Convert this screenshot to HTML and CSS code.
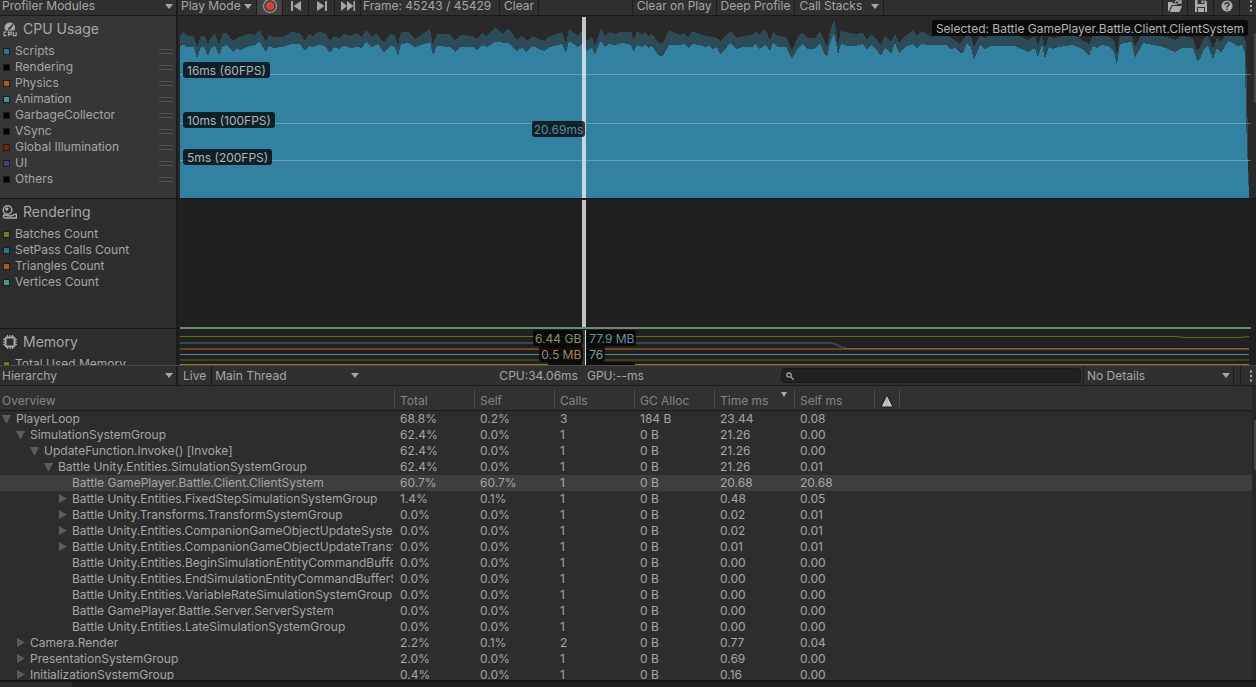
FILE: index.html
```html
<!DOCTYPE html>
<html lang="en">
<head>
<meta charset="utf-8">
<title>Profiler</title>
<link rel="stylesheet" href="styles.css">
</head>
<body>
<header class="toolbar toolbar-top">
  <label class="drop drop-side"><select aria-label="Profiler Modules"><option>Profiler Modules</option></select></label>
  <label class="drop drop-mode"><select aria-label="Target"><option>Play Mode</option></select></label>
  <button class="tool on" aria-label="Record"><svg width="16" height="16" viewBox="0 0 16 16"><circle cx="8" cy="8" r="6.500" fill="none" stroke="#999" stroke-width="1.200"/><circle cx="8" cy="8" r="4.300" fill="#d2423a"/></svg></button>
  <button class="tool" aria-label="Previous frame"><svg width="16" height="16" viewBox="0 0 16 16"><path fill="#a5a5a5" d="M3 3h2v10H3zM13 3v10L5.500 8z"/></svg></button>
  <button class="tool" aria-label="Next frame"><svg width="16" height="16" viewBox="0 0 16 16"><path fill="#a5a5a5" d="M11 3h2v10h-2zM3 3v10l7.500-5z"/></svg></button>
  <button class="tool" aria-label="Current frame"><svg width="16" height="16" viewBox="0 0 16 16"><path fill="#a5a5a5" d="M13.500 3h1.500v10h-1.500zM1 3v10l6-5zM7 3v10l6.500-5z"/></svg></button>
  <span class="frame">Frame: 45243 / 45429</span>
  <button class="tool text">Clear</button>
  <span class="gap"></span>
  <button class="tool text first">Clear on Play</button>
  <button class="tool text">Deep Profile</button>
  <button class="tool text stacks">Call Stacks</button>
  <button class="tool more" aria-label="Call stack options"><i class="arrow"></i></button>
  <span class="gap wide"></span>
  <button class="tool first" aria-label="Load"><svg width="16" height="16" viewBox="0 0 16 16"><path fill="#aaa" d="M1 13V4h4l1.500 1.500H10V7H4.500L2 13z"/><path fill="#aaa" d="M2.800 14L5.300 8H15l-2.500 6z"/><path fill="none" stroke="#aaa" stroke-width="1.400" d="M8 4.500C9 2 12 2 13.500 4.500M14 1.500v3.500h-3.500"/></svg></button>
  <button class="tool" aria-label="Save"><svg width="16" height="16" viewBox="0 0 16 16"><path fill="#aaa" fill-rule="evenodd" d="M2 2h10l2 2v10H2zM4.500 2v4h7V2zM4 9v5h8V9z"/><path fill="#aaa" d="M8.500 2.500h2v2.500h-2zM5 10h6v4H5z"/></svg></button>
  <button class="tool" aria-label="Help"><svg width="16" height="16" viewBox="0 0 16 16"><circle cx="8" cy="8" r="5.500" fill="#aaa"/><path fill="none" stroke="#303030" stroke-width="1.500" d="M6 6.800C6 4 10 4 10 6.500 10 8 8 8 8 9.500M8 10.500V12"/></svg></button>
  <button class="tool dots" aria-label="Menu"><svg width="4" height="16" viewBox="0 0 4 16"><path fill="#aaa" d="M1 2.500h2v2H1zM1 7h2v2H1zM1 11.500h2v2H1z"/></svg></button>
</header>

<main class="modules">
  <section class="module cpu">
    <div class="side">
      <h2><svg width="16" height="16" viewBox="0 0 16 16"><path fill="#a8a8a8" fill-rule="evenodd" d="M3.200 9.500A5.300 5.300 0 1 1 12.400 9.500zM10.800 2.800L7 6.500a1.200 1.200 0 1 0 1.500 1.500l3-4.300z"/><path fill="none" stroke="#a8a8a8" stroke-width="1.200" d="M4.500 11.200H2v3.500h2.500M6.500 15.300v-4.100h2.700v2.200H6.500M11.300 11v3.700h2.800V11"/></svg>CPU Usage</h2>
      <ul>
        <li><i class="box blue"></i>Scripts<b></b></li>
        <li><i class="box black"></i>Rendering<b></b></li>
        <li><i class="box orange"></i>Physics<b></b></li>
        <li><i class="box teal"></i>Animation<b></b></li>
        <li><i class="box black"></i>GarbageCollector<b></b></li>
        <li><i class="box black"></i>VSync<b></b></li>
        <li><i class="box red"></i>Global Illumination<b></b></li>
        <li><i class="box purple"></i>UI<b></b></li>
        <li><i class="box black"></i>Others<b></b></li>
      </ul>
    </div>
    <div class="chart">
      <svg class="plot" viewBox="180 16 1071 182" preserveAspectRatio="none" shape-rendering="crispEdges">
        <path fill="#2d4a57" d="M180 198V35L183 32 189 36 194 36 197 47 201 36 205 36 208 44 211 37 215 34 219 44 223 33 227 33 233 41 239 37 248 34 255 35 259 30 266 41 269 35 273 37 283 37 291 32 300 33 305 41 309 34 313 36 318 32 325 33 330 41 334 36 339 38 344 34 350 36 357 33 362 37 366 30 372 37 376 33 384 43 390 34 395 35 398 45 401 32 408 32 415 39 430 29 433 44 437 34 450 34 455 41 460 35 473 36 477 39 482 33 487 36 495 27 502 34 508 28 517 40 522 36 527 41 532 36 544 41 550 36 562 32 566 43 569 29 578 36 583 29 587 41 592 36 595 46 600 30 602 29 605 36 609 32 615 34 619 32 631 32 634 39 637 31 642 34 645 32 648 36 652 34 659 43 663 43 669 30 680 35 684 33 688 38 692 31 700 34 705 36 713 37 717 38 720 41 725 36 730 31 737 38 742 36 752 35 756 31 759 35 763 30 766 31 770 40 773 32 778 36 786 37 792 50 798 37 802 32 807 38 815 38 820 31 827 47 830 32 834 19 836 30 838 45 841 31 855 34 863 33 867 40 871 34 876 38 881 45 885 36 891 41 895 34 899 42 908 34 913 30 917 36 921 31 932 37 946 34 960 44 967 34 971 36 974 47 980 35 985 38 991 34 1015 34 1028 40 1035 36 1038 46 1042 33 1045 47 1049 36 1053 38 1073 34 1089 44 1093 35 1102 35 1108 36 1114 40 1117 54 1120 34 1130 31 1135 46 1143 32 1163 36 1175 40 1182 36 1193 38 1197 50 1200 47 1204 38 1208 36 1213 48 1217 38 1221 42 1228 31 1237 34 1242 34 1246 42 1247 90 1249 198z"/>
        <path fill="#3381a0" d="M180 198V46L184 45 187 47 194 47 197 59 201 47 204 47 208 56 211 48 215 46 219 55 223 46 227 45 233 52 237 49 241 50 247 47 255 45 259 41 266 52 269 46 273 48 283 47 291 44 300 44 305 51 309 46 313 47 318 45 325 46 330 53 334 47 339 49 344 46 350 48 357 47 362 48 366 42 372 47 378 44 384 53 390 46 395 47 398 56 401 44 408 43 415 47 430 42 433 55 437 46 450 47 455 52 460 47 473 47 477 50 482 45 487 47 495 42 508 43 517 51 522 48 527 52 532 46 544 51 550 47 562 44 566 53 569 41 578 47 583 43 587 51 592 48 595 55 600 42 602 42 605 47 609 44 615 45 623 43 631 45 634 52 637 45 642 47 645 44 648 48 652 46 659 56 663 56 669 45 680 45 684 44 688 48 692 44 700 45 705 47 709 46 713 49 717 47 720 54 725 50 730 43 737 49 742 47 752 47 756 44 759 49 766 45 770 51 773 43 778 47 786 47 792 59 798 48 802 44 807 49 815 49 820 43 824 53 827 57 830 43 834 33 836 43 838 55 841 44 847 46 855 46 863 44 867 50 871 45 876 49 881 56 885 48 891 54 895 43 899 53 907 46 913 44 917 49 921 44 928 45 946 45 950 49 956 48 960 53 963 53 967 43 971 48 974 60 980 45 985 49 991 46 1015 46 1028 52 1035 48 1038 57 1042 44 1045 59 1049 47 1053 49 1058 47 1073 45 1082 49 1089 56 1093 46 1097 48 1102 45 1108 46 1114 52 1117 65 1120 44 1130 42 1132 43 1135 58 1143 43 1153 45 1163 47 1175 52 1182 48 1193 48 1197 61 1200 59 1204 49 1208 46 1213 59 1217 48 1221 53 1228 41 1233 43 1237 46 1242 45 1245 53 1246 120 1249 198z"/>
        <path fill="none" stroke="#b9cdd3" stroke-opacity=".4" d="M180 74.500H1251M180 123.500H1251M180 160.500H1251"/>
      </svg>
      <span class="tag fps16">16ms (60FPS)</span>
      <span class="tag fps10">10ms (100FPS)</span>
      <span class="tag fps5">5ms (200FPS)</span>
      <div class="cursor"><span class="tag value left cpu-value">20.69ms</span></div>
      <span class="tag selected">Selected: Battle GamePlayer.Battle.Client.ClientSystem</span>
      <span class="thumb"></span>
    </div>
  </section>

  <section class="module rendering">
    <div class="side">
      <h2><svg width="16" height="16" viewBox="0 0 16 16"><circle cx="5.600" cy="6" r="4.300" fill="none" stroke="#a8a8a8" stroke-width="1.400"/><circle cx="4.800" cy="5" r="1.700" fill="#a8a8a8"/><path fill="none" stroke="#a8a8a8" stroke-width="1.400" d="M1.700 10.500C.8 14 2 14 4 14h10.300v-3.800C11.500 9.800 11 12 8.500 12 5 12 3 11.500 1.700 10.500"/></svg>Rendering</h2>
      <ul>
        <li><i class="box green"></i>Batches Count</li>
        <li><i class="box blue"></i>SetPass Calls Count</li>
        <li><i class="box orange"></i>Triangles Count</li>
        <li><i class="box teal"></i>Vertices Count</li>
      </ul>
    </div>
    <div class="chart"><div class="cursor"></div></div>
  </section>

  <section class="module memory">
    <div class="side">
      <h2><svg width="16" height="16" viewBox="0 0 16 16"><rect x="3.500" y="3.500" width="9" height="9" rx="1" fill="none" stroke="#a8a8a8" stroke-width="2"/><path stroke="#a8a8a8" stroke-width="1.200" d="M5.500 1v3M8 1v3M10.500 1v3M5.500 12v3M8 12v3M10.500 12v3M1 5.500h3M1 8h3M1 10.500h3M12 5.500h3M12 8h3M12 10.500h3"/></svg>Memory</h2>
      <ul><li><i class="box green"></i>Total Used Memory</li></ul>
    </div>
    <div class="chart">
      <svg class="plot" viewBox="180 329 1071 36" preserveAspectRatio="none">
        <g fill="none">
          <path stroke="#5f7010" d="M180 336.500H1175L1185 337.500H1240L1249 336.500"/>
          <path stroke="#734315" stroke-width="2" d="M180 349H1249"/>
          <path stroke="#294a59" stroke-width="2" d="M180 343H831C838 343 838 348 846 348"/>
          <path stroke="#6f6a58" d="M844 348.500H1249"/>
          <path stroke="#4a8a92" d="M180 354.500H1249"/>
          <path stroke="#463e14" stroke-width="2" d="M180 360H1249"/>
          <path stroke="#94781a" d="M180 364.500H1249"/>
          <path stroke="#0c0c0c" stroke-width="3" d="M548 363.500H635"/>
        </g>
      </svg>
      <div class="cursor thin">
        <span class="tag value left used">6.44 GB</span>
        <span class="tag value right textures">77.9 MB</span>
        <span class="tag value left second gc">0.5 MB</span>
        <span class="tag value right second count">76</span>
      </div>
    </div>
  </section>
</main>

<div class="toolbar toolbar-detail">
  <label class="drop drop-side"><select aria-label="View"><option>Hierarchy</option></select></label>
  <button class="tool text live">Live</button>
  <label class="drop drop-thread"><select aria-label="Thread"><option>Main Thread</option></select></label>
  <span class="gap"></span>
  <span class="times"><span>CPU:34.06ms</span><span>GPU:--ms</span></span>
  <span class="gap"></span>
  <label class="search"><svg width="8" height="8" viewBox="0 0 10 10"><circle cx="3.800" cy="3.800" r="2.700" fill="none" stroke="#aaa" stroke-width="1.500"/><path stroke="#aaa" stroke-width="1.700" d="M5.800 5.800L9.500 9.500"/></svg><input type="text" aria-label="Search"></label>
  <label class="drop drop-details"><select aria-label="Details"><option>No Details</option></select></label>
  <button class="tool dots last" aria-label="Details menu"><svg width="4" height="16" viewBox="0 0 4 16"><path fill="#aaa" d="M1 2.500h2v2H1zM1 7h2v2H1zM1 11.500h2v2H1z"/></svg></button>
</div>

<div class="hierarchy">
  <table>
    <colgroup><col class="c-name"><col class="c"><col class="c"><col class="c"><col class="c"><col class="c"><col class="c"><col class="c-warn"><col></colgroup>
    <thead><tr><th>Overview</th><th>Total</th><th>Self</th><th>Calls</th><th>GC Alloc</th><th class="sorted">Time ms</th><th>Self ms</th><th class="warn"><svg width="14" height="14" viewBox="0 0 14 14"><path fill="#c4c4c4" stroke="#1c1c1c" d="M7 1L13 13H1z"/><path stroke="#a0a0a0" d="M7 5v4M7 10.500V12"/></svg></th><th></th></tr></thead>
    <tbody>
      <tr><td class="d0"><button class="fold open" aria-label="Collapse"></button>PlayerLoop</td><td>68.8%</td><td>0.2%</td><td>3</td><td>184 B</td><td>23.44</td><td>0.08</td><td></td><td></td></tr>
      <tr><td class="d1"><button class="fold open" aria-label="Collapse"></button>SimulationSystemGroup</td><td>62.4%</td><td>0.0%</td><td>1</td><td>0 B</td><td>21.26</td><td>0.00</td><td></td><td></td></tr>
      <tr><td class="d2"><button class="fold open" aria-label="Collapse"></button>UpdateFunction.Invoke() [Invoke]</td><td>62.4%</td><td>0.0%</td><td>1</td><td>0 B</td><td>21.26</td><td>0.00</td><td></td><td></td></tr>
      <tr><td class="d3"><button class="fold open" aria-label="Collapse"></button>Battle Unity.Entities.SimulationSystemGroup</td><td>62.4%</td><td>0.0%</td><td>1</td><td>0 B</td><td>21.26</td><td>0.01</td><td></td><td></td></tr>
      <tr class="current"><td class="d5">Battle GamePlayer.Battle.Client.ClientSystem</td><td>60.7%</td><td>60.7%</td><td>1</td><td>0 B</td><td>20.68</td><td>20.68</td><td></td><td></td></tr>
      <tr><td class="d4"><button class="fold" aria-label="Expand"></button>Battle Unity.Entities.FixedStepSimulationSystemGroup</td><td>1.4%</td><td>0.1%</td><td>1</td><td>0 B</td><td>0.48</td><td>0.05</td><td></td><td></td></tr>
      <tr><td class="d4"><button class="fold" aria-label="Expand"></button>Battle Unity.Transforms.TransformSystemGroup</td><td>0.0%</td><td>0.0%</td><td>1</td><td>0 B</td><td>0.02</td><td>0.01</td><td></td><td></td></tr>
      <tr><td class="d4"><button class="fold" aria-label="Expand"></button>Battle Unity.Entities.CompanionGameObjectUpdateSystem</td><td>0.0%</td><td>0.0%</td><td>1</td><td>0 B</td><td>0.02</td><td>0.01</td><td></td><td></td></tr>
      <tr><td class="d4"><button class="fold" aria-label="Expand"></button>Battle Unity.Entities.CompanionGameObjectUpdateTransformSystem</td><td>0.0%</td><td>0.0%</td><td>1</td><td>0 B</td><td>0.01</td><td>0.01</td><td></td><td></td></tr>
      <tr><td class="d5">Battle Unity.Entities.BeginSimulationEntityCommandBufferSystem</td><td>0.0%</td><td>0.0%</td><td>1</td><td>0 B</td><td>0.00</td><td>0.00</td><td></td><td></td></tr>
      <tr><td class="d5">Battle Unity.Entities.EndSimulationEntityCommandBufferSystem</td><td>0.0%</td><td>0.0%</td><td>1</td><td>0 B</td><td>0.00</td><td>0.00</td><td></td><td></td></tr>
      <tr><td class="d5">Battle Unity.Entities.VariableRateSimulationSystemGroup</td><td>0.0%</td><td>0.0%</td><td>1</td><td>0 B</td><td>0.00</td><td>0.00</td><td></td><td></td></tr>
      <tr><td class="d5">Battle GamePlayer.Battle.Server.ServerSystem</td><td>0.0%</td><td>0.0%</td><td>1</td><td>0 B</td><td>0.00</td><td>0.00</td><td></td><td></td></tr>
      <tr><td class="d5">Battle Unity.Entities.LateSimulationSystemGroup</td><td>0.0%</td><td>0.0%</td><td>1</td><td>0 B</td><td>0.00</td><td>0.00</td><td></td><td></td></tr>
      <tr><td class="d1"><button class="fold" aria-label="Expand"></button>Camera.Render</td><td>2.2%</td><td>0.1%</td><td>2</td><td>0 B</td><td>0.77</td><td>0.04</td><td></td><td></td></tr>
      <tr><td class="d1"><button class="fold" aria-label="Expand"></button>PresentationSystemGroup</td><td>2.0%</td><td>0.0%</td><td>1</td><td>0 B</td><td>0.69</td><td>0.00</td><td></td><td></td></tr>
      <tr><td class="d1"><button class="fold" aria-label="Expand"></button>InitializationSystemGroup</td><td>0.4%</td><td>0.0%</td><td>1</td><td>0 B</td><td>0.16</td><td>0.00</td><td></td><td></td></tr>
    </tbody>
  </table>
  <span class="thumb"></span>
</div>
<footer class="hscroll"><span></span></footer>
</body>
</html>
```

FILE: styles.css
```css
* { box-sizing: border-box; }
body {
  margin: 0;
  height: 100vh;
  display: flex;
  flex-direction: column;
  overflow: hidden;
  background: #2d2d2d;
  color: #a6a6a6;
  font: 12px/16px Inter, sans-serif;
}
button, select, input { font: inherit; color: inherit; margin: 0; padding: 0; border: 0; background: none; border-radius: 0; outline: 0; }
svg { display: block; flex: none; }

.toolbar { display: flex; flex: none; background: #303030; white-space: nowrap; }
.toolbar-top { height: 16px; align-items: flex-end; overflow: hidden; border-bottom: 1px solid #1a1a1a; }
.toolbar-top > * { height: 18px; }
.toolbar-detail { height: 21px; align-items: stretch; border-top: 1px solid #484848; border-bottom: 1px solid #1a1a1a; }

.drop { position: relative; flex: none; border-right: 1px solid #1c1c1c; }
.drop select { appearance: none; display: block; width: 100%; height: 100%; padding-left: 2px; }
.drop::after, .arrow { content: ""; border: 4px solid transparent; border-top: 5px solid #a6a6a6; border-bottom: 0; }
.drop::after { position: absolute; right: 3px; top: 7px; }
.drop-side { width: 178px; border-right: 2px solid #1c1c1c; }
.drop-mode { width: 79px; }
.drop-mode select { padding-left: 3px; }
.drop-mode::after { right: 4px; }
.drop-thread { width: 150px; border-right: 0; }
.drop-thread select { padding-left: 3px; }
.drop-details { width: 151px; border-left: 1px solid #1c1c1c; margin-left: 2px; }
.drop-details select { padding-left: 3px; }

.tool { flex: none; display: flex; align-items: center; justify-content: center; width: 26px; border-right: 1px solid #1c1c1c; }
.tool.on { background: #424242; }
.tool.text { width: auto; padding: 0 4px; }
.tool.live { padding: 0 5px; }
.tool.first { border-left: 1px solid #1c1c1c; }
.tool.stacks { border-right: 0; }
.tool.more { width: 18px; }
.tool.dots { width: 16px; border-right: 0; justify-content: flex-end; padding-right: 3px; }
.tool.last { border-left: 1px solid #1c1c1c; margin-left: 6px; }
.frame { display: flex; align-items: center; width: 139px; padding-left: 2px; border-right: 1px solid #1c1c1c; }
.gap { flex: 1; }
.gap.wide { flex: 3; }
.times { display: flex; align-items: center; gap: 9px; }
.search { display: flex; align-items: center; flex: 0 0 300px; margin: 2px 0; padding-left: 4px; gap: 4px; background: #212121; border: 1px solid #191919; border-radius: 4px; }
.search input { flex: 1; min-width: 0; }

.modules { flex: none; }
.module { display: flex; border-bottom: 1px solid #161616; }
.cpu { height: 183px; }
.rendering { height: 130px; border-bottom: 0; }
.memory { height: 36px; overflow: hidden; border-bottom: 0; }
.side { flex: none; width: 178px; background: #2d2d2d; border-right: 2px solid #1c1c1c; }
.cpu .side { background: #363636; }
.rendering .side { border-bottom: 1px solid #161616; }
.side h2 { display: flex; align-items: center; gap: 5px; height: 27px; margin: 0; padding: 0 0 2px 2px; font-size: 14px; font-weight: 400; }
.side ul { margin: 0; padding: 0; list-style: none; }
.side li { display: flex; align-items: center; height: 16px; padding: 0 3px; }
.box { width: 7px; height: 7px; margin-right: 5px; border: 1px solid #1e1e1e; }
.blue { background: #2a7391; }
.black { background: #000; }
.orange { background: #a85e0a; }
.teal { background: #4a9299; }
.red { background: #782208; }
.purple { background: #51397a; }
.green { background: #67840f; }
.side li b { width: 14px; height: 5px; margin-left: auto; border: solid #525252; border-width: 1px 0; }

.chart { position: relative; flex: 1; min-width: 0; padding: 0 5px 0 2px; background: #202020; }
.cpu .chart { background: #292929; }
.rendering .chart { background: linear-gradient(#6d8a6d, #6d8a6d) bottom / 100% 2px no-repeat content-box, #202020; }
.plot { width: 100%; height: 100%; }
.cursor { position: absolute; top: 1px; bottom: 0; left: 37.5%; width: 4px; background: rgba(235, 235, 235, .8); }
.rendering .cursor { bottom: 2px; }
.cursor.thin { background: linear-gradient(90deg, #383838 3px, #ddd 3px); }
.tag { position: absolute; padding: 1px 4px 0; border-radius: 3px; background: rgba(0, 0, 0, .75); color: #b4b4b4; line-height: 15px; white-space: nowrap; }
.fps16 { left: 5px; top: 46px; }
.fps10 { left: 5px; top: 96px; }
.fps5 { left: 5px; top: 133px; }
.selected { right: 8px; top: 4px; }
.value { top: 0; padding: 1px 2px 0; }
.value.left { right: 3px; }
.value.right { left: 4px; padding-left: 3px; }
.value.second { top: 16px; }
.value.cpu-value { top: 104px; right: 1px; color: #5b8c9d; }
.used { color: #8c9260; }
.textures { color: #6e8f9e; }
.gc { color: #a58163; }
.count { color: #83a0a0; }
.thumb { position: absolute; right: 0; width: 2px; background: #444; }
.cpu .thumb { top: 17px; height: 70px; }

.hierarchy { position: relative; flex: 1; min-height: 0; overflow: hidden; padding-right: 4px; background: #272727; }
.hierarchy .thumb { top: 34px; height: 50px; }
table { width: 100%; table-layout: fixed; border-collapse: separate; border-spacing: 0; background: #2d2d2d; }
.c-name { width: 395px; }
.c { width: 80px; }
.c-warn { width: 25px; }
th { position: relative; height: 25px; padding: 5px 0 0 5px; border-bottom: 1px solid #1a1a1a; background: #313131; color: #858585; font-weight: 400; text-align: left; }
th:first-child { padding-left: 2px; }
th:not(:last-child)::after { content: ""; position: absolute; right: 0; top: 4px; width: 1px; height: 17px; background: #4b4b4b; }
th.sorted::before { content: ""; position: absolute; right: 8px; top: 6px; border: 3px solid transparent; border-top: 5px solid #aaa; border-bottom: 0; }
th.warn { padding-left: 5px; }
td { height: 16px; padding: 0 0 0 5px; overflow: hidden; white-space: nowrap; }
td:first-child { border-right: 2px solid #2d2d2d; }
.current td { background: #3e3e3e; border-color: #3e3e3e; }
td.d0 { padding-left: 2px; }
td.d1 { padding-left: 16px; }
td.d2 { padding-left: 30px; }
td.d3 { padding-left: 44px; }
td.d4 { padding-left: 58px; }
td.d5 { padding-left: 72px; }
.fold { display: inline-block; width: 14px; height: 9px; background: linear-gradient(#5c5c5c, #5c5c5c) 0 0 / 9px 9px no-repeat; clip-path: polygon(1px 0, 9px 50%, 1px 100%); }
.fold.open { clip-path: polygon(0 1px, 9px 1px, 5px 9px, 4px 9px); }

.hscroll { flex: none; height: 7px; border-top: 2px solid #171717; background: #202020; }
.hscroll span { display: block; width: 72px; height: 5px; background: #2d2d2d; }
```
